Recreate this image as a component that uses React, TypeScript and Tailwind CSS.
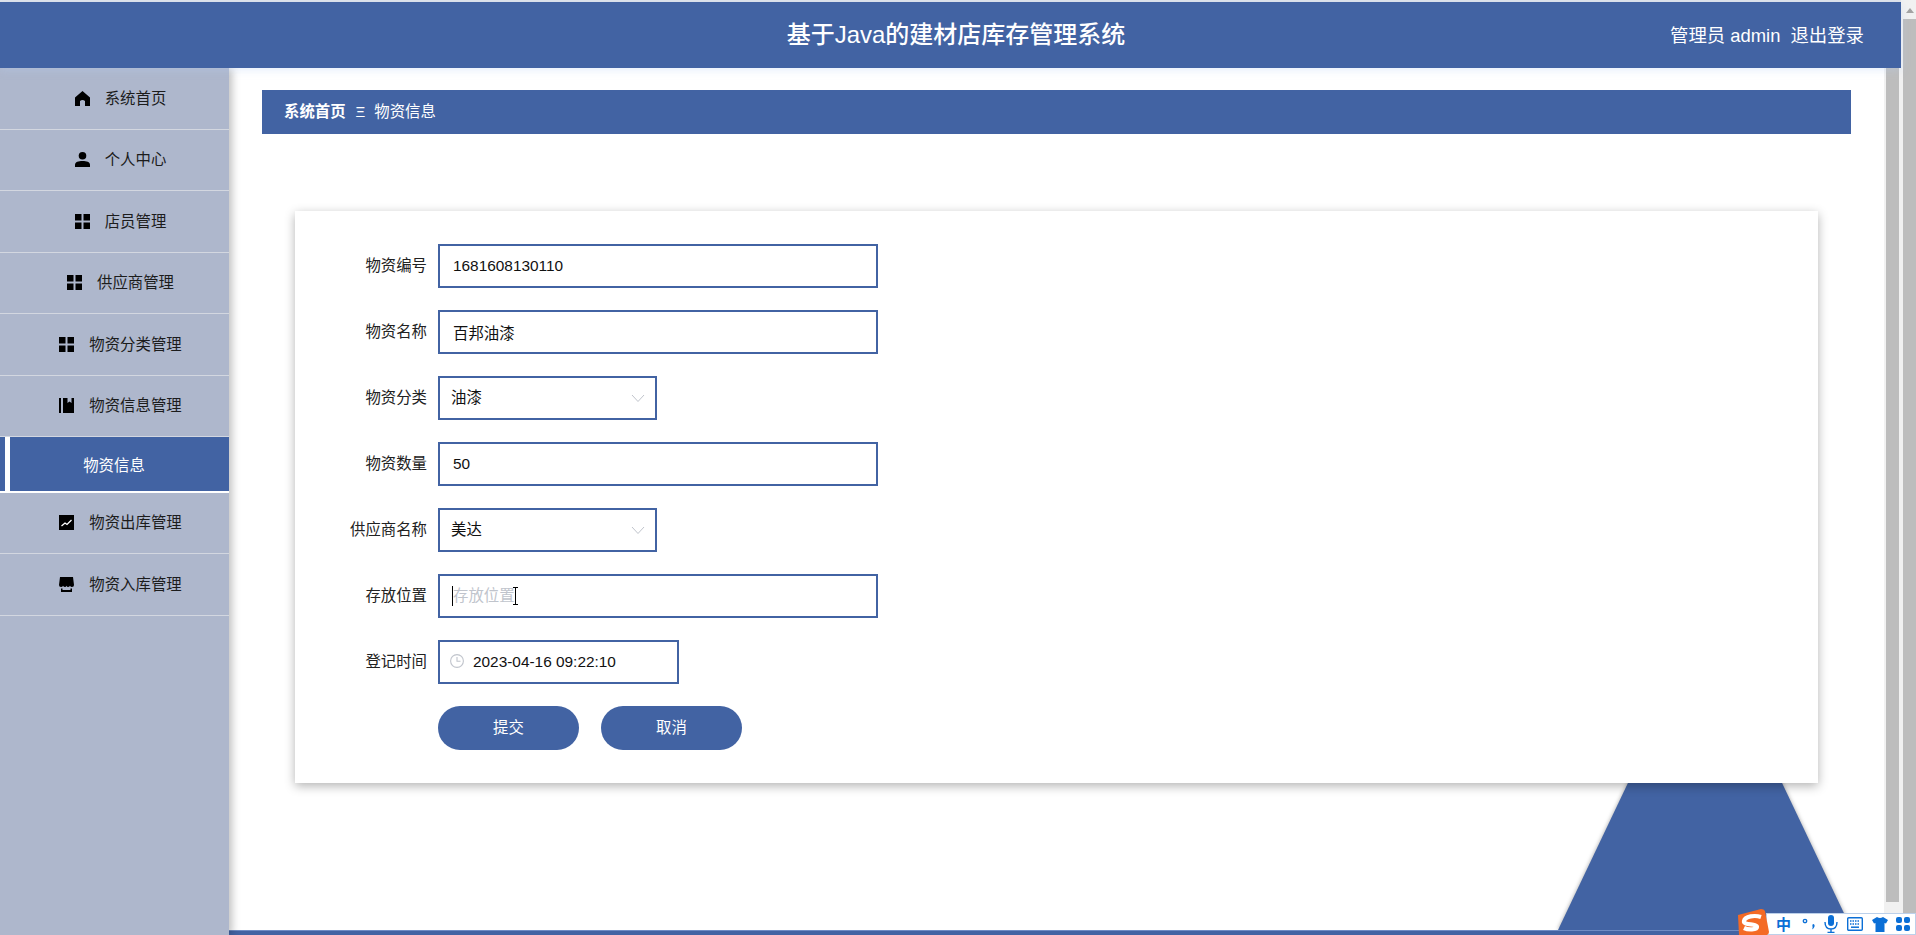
import React from "react";

const BLUE = "bg-[#4263a3]";

function Home() {
  return (
    <svg width="15" height="15" viewBox="0 0 15 15">
      <path d="M7.5 0 L15 6.6 V15 H10 V10 Q7.5 8 5 10 V15 H0 V6.6 Z" fill="#000" />
    </svg>
  );
}
function Person() {
  return (
    <svg width="15" height="15" viewBox="0 0 15 15">
      <circle cx="7.5" cy="3.8" r="3.8" fill="#000" />
      <path d="M0 15 V12.5 C0 10 3.5 9 7.5 9 C11.5 9 15 10 15 12.5 V15 Z" fill="#000" />
    </svg>
  );
}
function Grid() {
  return (
    <svg width="15" height="15" viewBox="0 0 15 15">
      <rect x="0" y="0" width="6.5" height="6.5" fill="#000" />
      <rect x="8.5" y="0" width="6.5" height="6.5" fill="#000" />
      <rect x="0" y="8.5" width="6.5" height="6.5" fill="#000" />
      <rect x="8.5" y="8.5" width="6.5" height="6.5" fill="#000" />
    </svg>
  );
}
function Book() {
  return (
    <svg width="15" height="15" viewBox="0 0 15 15">
      <rect x="0" y="0" width="2" height="15" fill="#000" />
      <path d="M4 0 H15 V15 H4 Z M8.5 0 V5 L10.5 3.6 L12.5 5 V0 Z" fill="#000" fillRule="evenodd" />
    </svg>
  );
}
function Chart() {
  return (
    <svg width="15" height="15" viewBox="0 0 15 15">
      <rect width="15" height="15" fill="#000" />
      <path d="M2.5 11 L6 8 L8 9.5 L12.5 5" stroke="#fff" strokeWidth="1.3" fill="none" />
    </svg>
  );
}
function Store() {
  return (
    <svg width="15" height="15" viewBox="0 0 15 15">
      <path d="M1 0 H14 L15 8 Q15 10 13 10 Q11.5 10 11 8.8 Q10.2 10 9 10 Q8 10 7.5 8.8 Q7 10 6 10 Q4.8 10 4 8.8 Q3.5 10 2 10 Q0 10 0 8 Z" fill="#000" />
      <path d="M2 11.5 H3.5 V13 H11.5 V11.5 H13 V15 H2 Z" fill="#000" />
    </svg>
  );
}

const items: { label: string; icon: React.ReactNode }[] = [
  { label: "系统首页", icon: <Home /> },
  { label: "个人中心", icon: <Person /> },
  { label: "店员管理", icon: <Grid /> },
  { label: "供应商管理", icon: <Grid /> },
  { label: "物资分类管理", icon: <Grid /> },
  { label: "物资信息管理", icon: <Book /> },
];
const itemsAfter: { label: string; icon: React.ReactNode }[] = [
  { label: "物资出库管理", icon: <Chart /> },
  { label: "物资入库管理", icon: <Store /> },
];

function NavItem({ label, icon }: { label: string; icon: React.ReactNode }) {
  return (
    <div className="flex h-[61.5px] items-center justify-center gap-[15px] border-b border-[#d3d7e0] pl-[12px] text-[15.4px] text-[#1c1c1c]">
      {icon}
      <span>{label}</span>
    </div>
  );
}

function Row({ label, children }: { label: string; children: React.ReactNode }) {
  return (
    <div className="flex h-[44px] items-center">
      <label className="w-[131px] pr-[11px] text-right text-[15.4px] text-[#222]">{label}</label>
      {children}
    </div>
  );
}

function TextField({ value }: { value: string }) {
  return (
    <input
      readOnly
      value={value}
      className="h-[44px] w-[440px] border-2 border-[#4263a3] bg-white px-[13px] text-[15.4px] text-[#111] outline-none"
    />
  );
}

function SelectField({ value }: { value: string }) {
  return (
    <div className="flex h-[44px] w-[219px] items-center justify-between border-2 border-[#4263a3] bg-white pl-[11px] pr-[10px] text-[15.4px] text-[#111]">
      <span>{value}</span>
      <svg width="14" height="9" viewBox="0 0 14 9">
        <path d="M1 1 L7 7.5 L13 1" stroke="#c0c4cc" strokeWidth="1" fill="none" />
      </svg>
    </div>
  );
}

function Ime() {
  return (
    <div className="absolute bottom-0 right-0 z-30 flex h-[25px] items-end">
      <svg width="34" height="30" viewBox="0 0 34 30" className="relative z-10 -mr-[4px] mb-[-3px]">
        <path d="M2 7 L25 1 Q28 1 29 3 L33 24 Q33 26 31 27 L9 30 H6 Q4 30 3 27 Z" fill="#f46a25" />
        <path
          d="M25 9 C19 7 9 8 8 13 C7 18 21 15 21 19 C21 22 12 22 8 20"
          stroke="#fff"
          strokeWidth="4.2"
          fill="none"
        />
      </svg>
      <div className="flex h-[22px] w-[150px] items-center border border-[#bcd0ea] bg-white pl-[9px] text-[#0b6fd6]">
        <span className="w-[16px] text-[15px] font-bold leading-none">中</span>
        <svg width="16" height="16" viewBox="0 0 16 16" className="ml-[10px]">
          <circle cx="3" cy="5" r="1.7" stroke="#0b6fd6" strokeWidth="1.3" fill="none" />
          <path d="M11 8 Q13 8 12.5 10.5 Q12 12.5 10 13.5 Q11 11.5 10.5 10.5 Q10 8.5 11 8 Z" fill="#0b6fd6" />
        </svg>
        <svg width="14" height="18" viewBox="0 0 14 18" className="ml-[6px]">
          <rect x="4" y="0" width="6" height="11" rx="3" fill="#0b6fd6" />
          <path d="M1 7 Q1 14 7 14 Q13 14 13 7 M7 14 V17 M3.5 17.5 H10.5" stroke="#0b6fd6" strokeWidth="1.4" fill="none" />
        </svg>
        <svg width="16" height="14" viewBox="0 0 16 14" className="ml-[9px]">
          <rect x="0.7" y="0.7" width="14.6" height="12.6" rx="1" stroke="#0b6fd6" strokeWidth="1.4" fill="none" />
          <path d="M3 4 H13 M3 7 H13" stroke="#0b6fd6" strokeWidth="1.5" strokeDasharray="1.5 1" />
          <path d="M4 10.2 H12" stroke="#0b6fd6" strokeWidth="1.5" />
        </svg>
        <svg width="16" height="15" viewBox="0 0 16 15" className="ml-[9px]">
          <path d="M5 0 Q8 2 11 0 L16 3 L14 6.5 L12.5 6 V15 H3.5 V6 L2 6.5 L0 3 Z" fill="#0b6fd6" />
        </svg>
        <svg width="14" height="14" viewBox="0 0 14 14" className="ml-[8px]">
          <rect x="0" y="0" width="6" height="6" rx="2" fill="#0b6fd6" />
          <rect x="8" y="0" width="6" height="6" rx="2" fill="#0b6fd6" />
          <rect x="0" y="8" width="6" height="6" rx="2" fill="#0b6fd6" />
          <rect x="8" y="8" width="6" height="6" rx="2" fill="#0b6fd6" />
        </svg>
      </div>
    </div>
  );
}

export default function App() {
  return (
    <div className="relative flex h-[935px] w-[1916px] overflow-hidden bg-white font-['Liberation_Sans','Noto_Sans_CJK_SC',sans-serif]">
      <div className="flex w-[1901px] flex-col">
        <div className="h-[2px] bg-[#dfe3ea]" />
        <header
          className={`relative z-20 flex h-[66px] items-center justify-center ${BLUE} text-white shadow-[0_2px_8px_rgba(180,205,245,0.35)]`}
        >
          <h1 className="pl-[11px] text-[24px] font-medium">基于Java的建材店库存管理系统</h1>
          <div className="absolute right-[37px] top-0 flex h-full items-center gap-[10px] pt-[1px] text-[18.4px]">
            <span>管理员 admin</span>
            <span>退出登录</span>
          </div>
        </header>

        <div className="flex min-h-0 flex-1">
          <aside className="relative z-10 w-[229px] bg-[#aeb7cc] shadow-[3px_0_8px_rgba(0,0,0,0.25)]">
            {items.map((it) => (
              <NavItem key={it.label} {...it} />
            ))}
            <div className="flex h-[55.5px] border-b-2 border-white bg-[#4263a3]">
              <div className="ml-[5px] flex flex-1 items-center justify-center border-l-[5px] border-white pr-[11px] pt-[3px] text-[15.4px] text-white">
                物资信息
              </div>
            </div>
            {itemsAfter.map((it) => (
              <NavItem key={it.label} {...it} />
            ))}
          </aside>

          <main className="relative flex min-w-0 flex-1 flex-col">
            <div className="flex-1 pl-[33px] pr-[50px] pt-[22px]">
              <div className={`flex h-[44px] items-center ${BLUE} pl-[22px] text-[15.4px] text-white`}>
                <span className="font-bold">系统首页</span>
                <span className="ml-[10px] text-[15px]">Ξ</span>
                <span className="ml-[9px]">物资信息</span>
              </div>

              <svg
                width="294"
                height="309"
                viewBox="0 0 294 309"
                className="absolute left-[1329px] top-[553px] drop-shadow-[0_0_2px_rgba(0,0,0,0.35)]"
              >
                <polygon points="147,0 294,309 0,309" fill="#4263a3" />
              </svg>

              <form className="relative z-10 ml-[33px] mt-[77px] flex h-[572px] w-[1523px] flex-col gap-[22px] bg-white pl-[12px] pt-[33px] shadow-[0_3px_10px_rgba(0,0,0,0.3)]">
                <Row label="物资编号">
                  <TextField value="1681608130110" />
                </Row>
                <Row label="物资名称">
                  <TextField value="百邦油漆" />
                </Row>
                <Row label="物资分类">
                  <SelectField value="油漆" />
                </Row>
                <Row label="物资数量">
                  <TextField value="50" />
                </Row>
                <Row label="供应商名称">
                  <SelectField value="美达" />
                </Row>
                <Row label="存放位置">
                  <div className="relative">
                    <input
                      readOnly
                      placeholder="存放位置"
                      className="h-[44px] w-[440px] border-2 border-[#4263a3] bg-white px-[13px] text-[15.4px] outline-none placeholder:text-[#c0c4cc]"
                    />
                    <span className="absolute left-[14px] top-[12px] h-[20px] w-px bg-black" />
                    <span className="absolute left-[75px] top-[13px] h-[18px] w-[5px] border-x-0 border-y border-black">
                      <span className="absolute left-[2px] top-0 h-full w-px bg-black" />
                    </span>
                  </div>
                </Row>
                <Row label="登记时间">
                  <div className="flex h-[44px] w-[241px] items-center gap-[9px] border-2 border-[#4263a3] bg-white pl-[10px] text-[15.4px] text-[#111]">
                    <svg width="14" height="14" viewBox="0 0 14 14" className="mb-[2px]">
                      <circle cx="7" cy="7" r="6.4" stroke="#c0c4cc" strokeWidth="1.1" fill="none" />
                      <path d="M7 3 V7.3 H10.5" stroke="#c0c4cc" strokeWidth="1.1" fill="none" />
                    </svg>
                    <span>2023-04-16 09:22:10</span>
                  </div>
                </Row>
                <div className="flex gap-[22px] pl-[131px]">
                  <button type="button" className={`h-[44px] w-[141px] rounded-[22px] ${BLUE} text-[15.4px] text-white`}>
                    提交
                  </button>
                  <button type="button" className={`h-[44px] w-[141px] rounded-[22px] ${BLUE} text-[15.4px] text-white`}>
                    取消
                  </button>
                </div>
              </form>
            </div>
            <div className={`relative h-[5px] border-t border-[#6f8cc4] ${BLUE}`} />
            <div className="absolute bottom-0 right-0 top-0 w-[17px] bg-[#f1f1f1] px-[2px]">
              <div className="h-[834px] bg-[#bdbdbd]" />
            </div>
          </main>
        </div>
      </div>

      <div className="w-[15px] bg-[#f1f1f1] pl-[2px] pt-[2px]">
        <div className="flex h-[17px] items-center justify-center">
          <svg width="8" height="5" viewBox="0 0 8 5">
            <polygon points="4,0 8,5 0,5" fill="#a3a3a3" />
          </svg>
        </div>
        <div className="h-[895px] bg-[#bdbdbd]" />
      </div>

      <Ime />
    </div>
  );
}
